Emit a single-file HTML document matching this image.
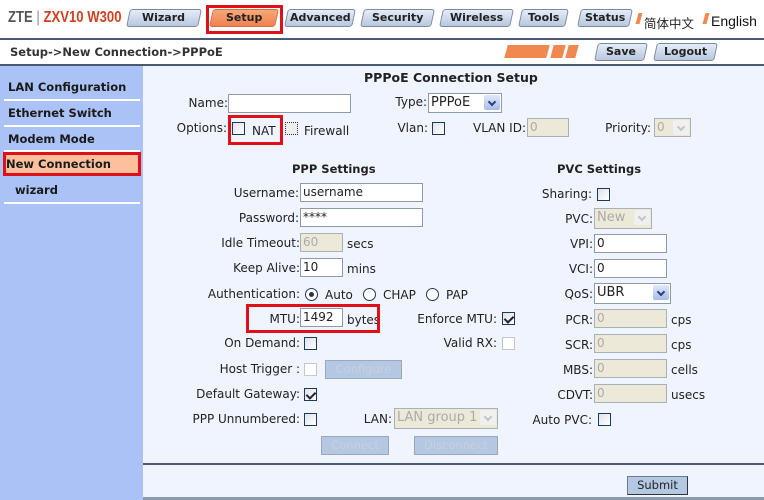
<!DOCTYPE html>
<html><head><meta charset="utf-8"><style>
*{margin:0;padding:0;box-sizing:border-box}
body{width:764px;height:500px;overflow:hidden;background:#fff;font-family:"DejaVu Sans","Liberation Sans","Noto Sans CJK SC",sans-serif;font-size:12px;color:#222;position:relative}
.a{position:absolute;white-space:nowrap}
.l{position:absolute;white-space:nowrap;text-align:right;width:200px;line-height:16px}
.tab{position:absolute;top:9px;height:18px;background:linear-gradient(#e4ecf8,#b8c8de);border:1px solid #7c8aa0;border-radius:3px;transform:skewX(-12deg);font-weight:bold;font-size:11px;color:#222;text-align:center;line-height:16px}
.tab span{display:inline-block;transform:skewX(12deg)}
.in{position:absolute;height:19px;background:#fff;border:1px solid #8e9aa8;font-size:12px;line-height:17px;padding-left:2px}
.dis{background:#ece9d8;color:#aaa;border-color:#a8b0b8}
.cb{position:absolute;width:13px;height:13px;border:1px solid #1c3a5c;background:linear-gradient(135deg,#dfe3ea,#fff)}
.cb.d{border-color:#c4c8cc;background:#fff}
.ck::after{content:"";position:absolute;left:3px;top:1px;width:4px;height:7px;border:solid #223;border-width:0 2px 2px 0;transform:rotate(45deg)}
.rd{position:absolute;width:13px;height:13px;border:1px solid #1c3a5c;border-radius:50%;background:#fff}
.rd.on::after{content:"";position:absolute;left:3px;top:3px;width:5px;height:5px;border-radius:50%;background:#333}
.arr{position:absolute;right:1px;top:1px;width:16px;height:15px;background:linear-gradient(#e0e8fa,#a8bcec);border-radius:2px}
.arr::after{content:"";position:absolute;left:5px;top:4px;width:4px;height:4px;border:solid #2a3e78;border-width:0 2px 2px 0;transform:rotate(45deg)}
.arr.g{background:#f0f0ee}.arr.g::after{border-color:#c0c4cc}
.btn{position:absolute;height:19px;background:#b4c8e4;border:1px solid #6a7a90;border-right-color:#333;border-bottom-color:#333;text-align:center;line-height:17px;font-size:11.5px}
.btn.d{color:#c8d0dc;border-color:#9aa8b8}
.red{position:absolute;border:3px solid #e0101a}
.sb{position:absolute;left:4px;width:136px;font-weight:bold;font-size:11.5px;color:#1a1a1a;line-height:16px}
.sep{position:absolute;left:4px;width:136px;height:2px;background:#fff}
</style></head><body>
<!-- header -->
<div class="a" style="left:8px;top:9px;font-family:'Liberation Sans',sans-serif;font-size:16px;font-weight:bold;color:#555;transform:scaleX(.82);transform-origin:left">ZTE<span style="color:#888;font-weight:normal"> | </span><span style="color:#d24020">ZXV10 W300</span></div>
<div class="tab" style="left:128px;width:72px"><span>Wizard</span></div>
<div class="tab" style="left:211px;width:66px;background:linear-gradient(#f8a878,#f08050);border-color:#d07040"><span>Setup</span></div>
<div class="red" style="left:206px;top:5px;width:77px;height:29px"></div>
<div class="tab" style="left:286px;width:68px"><span>Advanced</span></div>
<div class="tab" style="left:362px;width:71px"><span>Security</span></div>
<div class="tab" style="left:441px;width:71px"><span>Wireless</span></div>
<div class="tab" style="left:520px;width:47px"><span>Tools</span></div>
<div class="tab" style="left:579px;width:52px"><span>Status</span></div>
<div class="a" style="left:637px;top:13px;width:4px;height:11px;background:#f08850;transform:skewX(-15deg)"></div>
<div class="a" style="left:644px;top:13px;font-size:12.5px">简体中文</div>
<div class="a" style="left:704px;top:13px;width:4px;height:11px;background:#f08850;transform:skewX(-15deg)"></div>
<div class="a" style="left:711px;top:13px;font-family:'Liberation Sans',sans-serif;font-size:14px;color:#111">English</div>
<div class="a" style="left:0;top:38px;width:764px;height:2px;background:#4a5870"></div>
<div class="a" style="left:10px;top:45px;font-weight:bold;font-size:11.5px;color:#333">Setup-&gt;New Connection-&gt;PPPoE</div>
<div class="a" style="left:506px;top:45px;width:42px;height:13px;background:#f08850;transform:skewX(-15deg)"></div>
<div class="a" style="left:552px;top:45px;width:12px;height:13px;background:#f08850;transform:skewX(-15deg)"></div>
<div class="a" style="left:567px;top:45px;width:10px;height:13px;background:#f08850;transform:skewX(-15deg)"></div>
<div class="tab" style="left:596px;top:43px;width:50px"><span>Save</span></div>
<div class="tab" style="left:655px;top:43px;width:61px"><span>Logout</span></div>
<div class="a" style="left:0;top:64px;width:764px;height:2px;background:#4a5870"></div>
<!-- sidebar -->
<div class="a" style="left:0;top:66px;width:143px;height:434px;background:#aac2f6"></div>
<div class="sb" style="top:79px">&nbsp;LAN Configuration</div>
<div class="sep" style="top:99px"></div>
<div class="sb" style="top:105px">&nbsp;Ethernet Switch</div>
<div class="sep" style="top:125px"></div>
<div class="sb" style="top:131px">&nbsp;Modem Mode</div>
<div class="sep" style="top:150px"></div>
<div class="a" style="left:3px;top:152px;width:138px;height:24px;background:#fcc09c;border:3px solid #e0101a"></div>
<div class="sb" style="top:156px;left:6px">New Connection</div>
<div class="sb" style="top:182px;left:15px">wizard</div>
<div class="sep" style="top:202px"></div>
<!-- main -->
<div class="a" style="left:143px;top:66px;width:621px;height:434px;background:#f0f4fe"></div>
<div class="a" style="left:364px;top:70px;font-weight:bold;font-size:12.5px;color:#222">PPPoE Connection Setup</div>

<div class="l" style="left:28px;top:95px">Name:</div>
<div class="in" style="left:228px;top:94px;width:123px"></div>
<div class="l" style="left:227px;top:94px">Type:</div>
<div class="in" style="left:428px;top:93px;width:74px;height:20px;font-size:13px">PPPoE<div class="arr"></div></div>

<div class="l" style="left:27px;top:120px">Options:</div>
<div class="cb" style="left:232px;top:122px"></div>
<div class="a" style="left:252px;top:124px">NAT</div>
<div class="red" style="left:228px;top:115px;width:55px;height:30px"></div>
<div class="cb" style="left:285px;top:122px;border:1px dotted #333;background:#eee"></div>
<div class="a" style="left:304px;top:124px">Firewall</div>
<div class="l" style="left:228px;top:120px">Vlan:</div>
<div class="cb" style="left:432px;top:122px"></div>
<div class="l" style="left:326px;top:120px">VLAN ID:</div>
<div class="in dis" style="left:527px;top:118px;width:42px">0</div>
<div class="l" style="left:451px;top:120px">Priority:</div>
<div class="in dis" style="left:654px;top:118px;width:37px">0<div class="arr g"></div></div>

<div class="a" style="left:292px;top:162px;font-weight:bold;font-size:11.5px">PPP Settings</div>
<div class="a" style="left:557px;top:162px;font-weight:bold;font-size:11.5px">PVC Settings</div>

<div class="l" style="left:99px;top:185px">Username:</div>
<div class="in" style="left:300px;top:183px;width:123px">username</div>
<div class="l" style="left:99px;top:210px">Password:</div>
<div class="in" style="left:300px;top:208px;width:123px">****</div>
<div class="l" style="left:100px;top:235px">Idle Timeout:</div>
<div class="in dis" style="left:300px;top:233px;width:43px">60</div>
<div class="a" style="left:347px;top:237px">secs</div>
<div class="l" style="left:100px;top:260px">Keep Alive:</div>
<div class="in" style="left:300px;top:258px;width:43px">10</div>
<div class="a" style="left:347px;top:262px">mins</div>
<div class="l" style="left:100px;top:286px">Authentication:</div>
<div class="rd on" style="left:305px;top:288px"></div><div class="a" style="left:325px;top:288px">Auto</div>
<div class="rd" style="left:363px;top:288px"></div><div class="a" style="left:383px;top:288px">CHAP</div>
<div class="rd" style="left:426px;top:288px"></div><div class="a" style="left:446px;top:288px">PAP</div>
<div class="l" style="left:100px;top:311px">MTU:</div>
<div class="in" style="left:300px;top:308px;width:43px">1492</div>
<div class="a" style="left:347px;top:313px">bytes</div>
<div class="red" style="left:246px;top:304px;width:134px;height:29px"></div>
<div class="l" style="left:297px;top:311px">Enforce MTU:</div>
<div class="cb ck" style="left:502px;top:312px"></div>
<div class="l" style="left:100px;top:335px">On Demand:</div>
<div class="cb" style="left:304px;top:337px"></div>
<div class="l" style="left:297px;top:335px">Valid RX:</div>
<div class="cb d" style="left:502px;top:337px"></div>
<div class="l" style="left:100px;top:361px">Host Trigger :</div>
<div class="cb d" style="left:304px;top:363px"></div>
<div class="btn d" style="left:325px;top:360px;width:77px">Configure</div>
<div class="l" style="left:100px;top:386px">Default Gateway:</div>
<div class="cb ck" style="left:304px;top:388px"></div>
<div class="l" style="left:100px;top:411px">PPP Unnumbered:</div>
<div class="cb" style="left:304px;top:413px"></div>
<div class="l" style="left:192px;top:411px">LAN:</div>
<div class="in dis" style="left:394px;top:408px;width:104px;height:21px;font-size:13px">LAN group 1<div class="arr g"></div></div>
<div class="btn d" style="left:321px;top:436px;width:68px">Connect</div>
<div class="btn d" style="left:414px;top:436px;width:84px">Disconnect</div>

<div class="l" style="left:392px;top:186px">Sharing:</div>
<div class="cb" style="left:597px;top:188px"></div>
<div class="l" style="left:393px;top:211px">PVC:</div>
<div class="in dis" style="left:594px;top:208px;width:58px;height:21px;font-size:13px">New<div class="arr g"></div></div>
<div class="l" style="left:393px;top:236px">VPI:</div>
<div class="in" style="left:594px;top:234px;width:73px">0</div>
<div class="l" style="left:393px;top:261px">VCI:</div>
<div class="in" style="left:594px;top:259px;width:73px">0</div>
<div class="l" style="left:393px;top:286px">QoS:</div>
<div class="in" style="left:594px;top:283px;width:77px;height:21px;font-size:13px">UBR<div class="arr"></div></div>
<div class="l" style="left:393px;top:312px">PCR:</div>
<div class="in dis" style="left:594px;top:309px;width:73px">0</div><div class="a" style="left:671px;top:313px">cps</div>
<div class="l" style="left:393px;top:337px">SCR:</div>
<div class="in dis" style="left:594px;top:334px;width:73px">0</div><div class="a" style="left:671px;top:338px">cps</div>
<div class="l" style="left:393px;top:362px">MBS:</div>
<div class="in dis" style="left:594px;top:359px;width:73px">0</div><div class="a" style="left:671px;top:363px">cells</div>
<div class="l" style="left:393px;top:387px">CDVT:</div>
<div class="in dis" style="left:594px;top:384px;width:73px">0</div><div class="a" style="left:671px;top:388px">usecs</div>
<div class="l" style="left:392px;top:412px">Auto PVC:</div>
<div class="cb" style="left:598px;top:413px"></div>

<div class="a" style="left:143px;top:463px;width:621px;height:2px;background:#4a5870"></div>
<div class="btn" style="left:627px;top:476px;width:61px">Submit</div>
<div class="a" style="left:143px;top:497px;width:621px;height:3px;background:#8a98b0"></div>
</body></html>
